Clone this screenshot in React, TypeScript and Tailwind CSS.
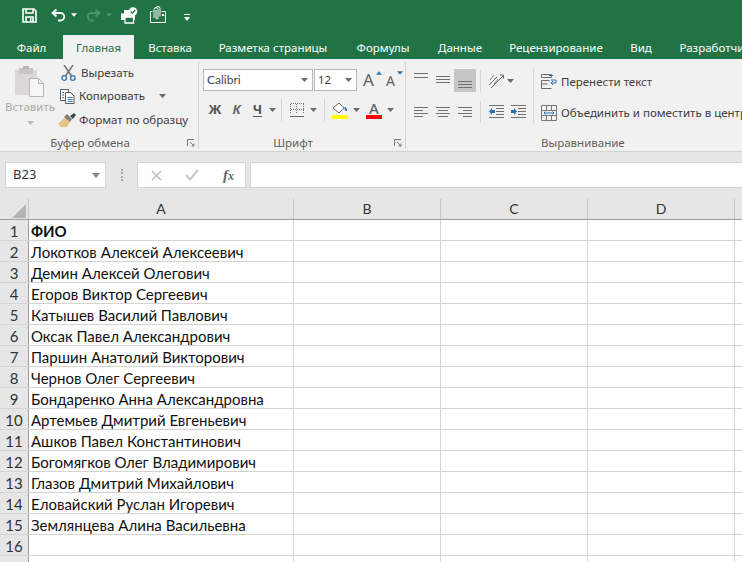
import React from "react";

const UI = "font-['Noto_Sans','Open_Sans',sans-serif]";

function Caret({ className = "" }: { className?: string }) {
  return <svg width="7" height="4" viewBox="0 0 7 4" className={`shrink-0 ${className}`}><path d="M0 0h7L3.500 4z" fill="#6a6a6a" /></svg>;
}

function AlignIcon({ kind }: { kind: "top" | "mid" | "bot" | "left" | "center" | "right" }) {
  const s = "#707070";
  if (kind === "top") return <svg width="16" height="23" viewBox="0 0 16 23"><path d="M1 4.500h14M1 8.500h14" stroke={s} fill="none" /></svg>;
  if (kind === "mid") return <svg width="16" height="23" viewBox="0 0 16 23"><path d="M1 7.500h14M1 10.500h14M1 13.500h14" stroke={s} fill="none" /></svg>;
  if (kind === "bot") return <svg width="16" height="23" viewBox="0 0 16 23"><path d="M1 12.500h14M1 15.500h14M1 18.500h14" stroke={s} fill="none" /></svg>;
  const d = kind === "left"
    ? "M1 3.500h14M1 6.500h9M1 9.500h14M1 12.500h9"
    : kind === "center"
      ? "M1 3.500h14M3 6.500h10M1 9.500h14M3 12.500h10"
      : "M1 3.500h14M6 6.500h9M1 9.500h14M6 12.500h9";
  return <svg width="16" height="16" viewBox="0 0 16 16"><path d={d} stroke={s} fill="none" /></svg>;
}

function Indent({ rev }: { rev?: boolean }) {
  return (
    <svg width="16" height="16" viewBox="0 0 16 16">
      <path d="M1 1.500h15M8 4.500h8M8 7.500h8M8 10.500h8M1 13.500h15" stroke="#707070" fill="none" />
      {rev ? <path d="M1 6h3V4l3 3.500-3 3.500V9H1z" fill="#2f6fb0" /> : <path d="M7 6H4V4L1 7.500 4 11V9h3z" fill="#2f6fb0" />}
    </svg>
  );
}

function Save() {
  return (
    <svg width="15" height="15" viewBox="0 0 15 15" fill="none">
      <path d="M1 1h11l2 2v11H1z" stroke="#fff" strokeWidth="1.600" />
      <path d="M4 1v4h7V1" stroke="#fff" strokeWidth="1.600" />
      <path d="M4 14V9h7v5" stroke="#fff" strokeWidth="1.600" />
      <path d="M8 10h1.500v4H8z" fill="#fff" />
    </svg>
  );
}

function Undo({ dim, flip }: { dim?: boolean; flip?: boolean }) {
  const c = dim ? "#4d9471" : "#fff";
  return (
    <svg width="15" height="14" viewBox="0 0 15 14" fill="none" className={flip ? "-scale-x-100" : ""}>
      <path d="M5.500 1.500 1.500 5l4 3.500" stroke={c} strokeWidth="1.800" />
      <path d="M2 5h7.500a3.500 3.500 0 0 1 0 7.500H7" stroke={c} strokeWidth="1.800" />
    </svg>
  );
}

function Printer() {
  return (
    <svg width="17" height="17" viewBox="0 0 17 17">
      <path d="M3 3h6v4H3z" fill="#fff" />
      <path d="M0 6.500h14V13H0z" fill="#fff" />
      <path d="M4 10h8.500v6H4z" fill="#217346" stroke="#fff" strokeWidth="1.300" />
      <circle cx="12" cy="4.500" r="4.300" fill="#fff" />
      <path d="m9.800 4.500 1.600 1.700 2.800-3.200" stroke="#217346" strokeWidth="1.200" fill="none" />
    </svg>
  );
}

function Attach() {
  return (
    <svg width="16" height="18" viewBox="0 0 16 18" fill="none" stroke="#fff">
      <path d="M2.500 5.500h-2v11h15v-11h-4" />
      <path d="M4 12V3.500a2 2 0 0 1 4 0V12a1 1 0 0 1-2 0V4" />
      <path d="M6 2.500a2 2 0 0 1 4 0v8" />
      <path d="M12 8h2v2h-2z" fill="#fff" stroke="none" />
    </svg>
  );
}

function Paste() {
  return (
    <svg width="30" height="31" viewBox="0 0 30 31">
      <path d="M0 4h22v25H0z" fill="#dcd8da" />
      <path d="M4 2h14v6H4z" fill="#c9c5c7" />
      <path d="M8 0h6v3H8z" fill="#b9b5b7" />
      <path d="M14.500 12.500h9l5 5v13h-14z" fill="#f7f5f7" stroke="#b8b4b6" />
      <path d="M23.500 12.500v5h5" fill="none" stroke="#b8b4b6" />
    </svg>
  );
}

function Scissors() {
  return (
    <svg width="15" height="16" viewBox="0 0 15 16" fill="none">
      <path d="M3 0 10.500 11M12 0 4.500 11" stroke="#6e6e6e" strokeWidth="1.400" />
      <circle cx="3.200" cy="13" r="2.300" stroke="#2f74b5" strokeWidth="1.300" />
      <circle cx="11.800" cy="13" r="2.300" stroke="#2f74b5" strokeWidth="1.300" />
    </svg>
  );
}

function Copy() {
  return (
    <svg width="15" height="16" viewBox="0 0 15 16" fill="none">
      <path d="M.5 1.500h8v11h-8z" fill="#fff" stroke="#5b5b5b" />
      <path d="M5.500 4.500h5l3.500 3.500v7.500H5.500z" fill="#fff" stroke="#5b5b5b" />
      <path d="M2 4.500h2M2 7h2M2 9.500h2M7.500 9.500h5M7.500 11.500h5M7.500 13.500h5" stroke="#2f74b5" />
    </svg>
  );
}

function Brush() {
  return (
    <svg width="18" height="15" viewBox="0 0 18 15">
      <path d="m0 11 7-7 5 5-3 5H3z" fill="#e8c48a" />
      <path d="m6 4 3-3 5 5-2 3z" fill="#808080" />
      <path d="m12 3 4-3 2 2-3 4z" fill="#4a4a4a" />
    </svg>
  );
}

function Launcher() {
  return (
    <svg width="8" height="8" viewBox="0 0 8 8" fill="none" className="shrink-0">
      <path d="M.5 7V.5H7" stroke="#777" />
      <path d="M3 3l4 4M7 4.500V7H4.500" stroke="#777" />
    </svg>
  );
}

function Group({ width, label, children }: { width: string; label: string; children: React.ReactNode }) {
  return (
    <div className={`flex flex-col shrink-0 border-r border-[#d4d4d4] h-[87px] mt-[3px] ${width}`}>
      <div className="flex-1 min-h-0 flex">{children}</div>
      <div className="h-[14px] flex items-center relative pr-[18px] pt-[1px]">
        <span className="text-[11.5px] text-[#5f5f5f] mx-auto">{label}</span>
        <span className="absolute right-[3px] top-[4px]"><Launcher /></span>
      </div>
    </div>
  );
}

const names = [
  "ФИО",
  "Локотков Алексей Алексеевич",
  "Демин Алексей Олегович",
  "Егоров Виктор Сергеевич",
  "Катышев Василий Павлович",
  "Оксак Павел Александрович",
  "Паршин Анатолий Викторович",
  "Чернов Олег Сергеевич",
  "Бондаренко Анна Александровна",
  "Артемьев Дмитрий Евгеньевич",
  "Ашков Павел Константинович",
  "Богомягков Олег Владимирович",
  "Глазов Дмитрий Михайлович",
  "Еловайский Руслан Игоревич",
  "Землянцева Алина Васильевна",
  "",
  "",
];

const tabs: [string, string][] = [
  ["Вставка", "w-[72px]"],
  ["Разметка страницы", "w-[134px]"],
  ["Формулы", "w-[86px]"],
  ["Данные", "w-[68px]"],
  ["Рецензирование", "w-[124px]"],
  ["Вид", "w-[46px]"],
  ["Разработчик", "w-[102px]"],
];

export default function App() {
  return (
    <div className={`w-[742px] h-[562px] overflow-hidden bg-white flex flex-col ${UI}`}>
      {/* Quick access */}
      <div className="h-[35px] shrink-0 bg-[#217346] flex items-center pb-[5px]">
        <div className="ml-[22px] flex items-center"><Save /></div>
        <div className="ml-[14px] flex items-center"><Undo /></div>
        <svg width="6" height="4" viewBox="0 0 7 4" className="ml-[5px]"><path d="M0 0h7L3.500 4z" fill="#fff" /></svg>
        <div className="ml-[9px] flex items-center"><Undo dim flip /></div>
        <svg width="6" height="4" viewBox="0 0 7 4" className="ml-[5px]"><path d="M0 0h7L3.500 4z" fill="#4d9471" /></svg>
        <div className="ml-[9px] flex items-center"><Printer /></div>
        <div className="ml-[12px] flex items-center"><Attach /></div>
        <svg width="6" height="7" viewBox="0 0 6 7" className="ml-[18px] mt-[4px]"><path d="M0 .5h6" stroke="#fff" /><path d="M0 3h6L3 7z" fill="#fff" /></svg>
      </div>
      {/* Tabs */}
      <div className="h-[24px] shrink-0 bg-[#217346] flex text-[11.5px] text-white">
        <div className="w-[63px] shrink-0 text-center leading-[22px] pt-[2px]">Файл</div>
        <div className="w-[71px] shrink-0 bg-[#f1f1f1] text-[#217346] text-center leading-[22px] pt-[2px]">Главная</div>
        {tabs.map(([t, w]) => (
          <div key={t} className={`${w} shrink-0 text-center leading-[22px] pt-[2px] whitespace-nowrap`}>{t}</div>
        ))}
      </div>
      {/* Ribbon */}
      <div className="h-[93px] shrink-0 bg-[#f1f1f1] border-b border-[#d2d2d2] flex text-[11.5px] text-[#3c3c3c]">
        <Group width="w-[199px]" label="Буфер обмена">
          <div className="w-[58px] shrink-0 flex flex-col items-center pt-[4px] pl-[2px]">
            <Paste />
            <span className="text-[#a8a8a8] mt-[2px] leading-[16px]">Вставить</span>
            <Caret className="mt-[6px] opacity-40" />
          </div>
          <div className="flex flex-col mt-[-1px]">
            <div className="h-[23px] flex items-center gap-[5px] ml-[3px]"><Scissors /><span>Вырезать</span></div>
            <div className="h-[24px] flex items-center gap-[4px] ml-[2px]"><Copy /><span>Копировать</span><Caret className="ml-[10px]" /></div>
            <div className="h-[24px] flex items-center gap-[3px]"><Brush /><span className="whitespace-nowrap">Формат по образцу</span></div>
          </div>
        </Group>
        <Group width="w-[207px]" label="Шрифт">
          <div className="flex flex-col pl-[4px] pt-[7px]">
            <div className="flex items-center h-[22px]">
              <div className="w-[110px] h-[22px] shrink-0 bg-white border border-[#b9b9b9] flex items-center justify-between pl-[3px] pr-[4px]">
                <span className="text-[#3a4a6a] font-['Lato',sans-serif] text-[12px]">Calibri</span><Caret />
              </div>
              <div className="w-[43px] h-[22px] shrink-0 ml-[1px] bg-white border border-[#b9b9b9] flex items-center justify-between pl-[3px] pr-[4px]">
                <span className="text-[#3c3c3c]">12</span><Caret />
              </div>
              <div className="ml-[6px] relative w-[16px] text-[17px] text-[#606060] leading-[20px]">A
                <svg width="6" height="4" viewBox="0 0 5 3" className="absolute right-[-3px] top-[1px]"><path d="M0 3h5L2.500 0z" fill="#2f74b5" /></svg>
              </div>
              <div className="ml-[7px] relative w-[14px] text-[14px] text-[#606060] leading-[20px] pt-[1px]">A
                <svg width="6" height="4" viewBox="0 0 5 3" className="absolute right-[-3px] top-[1px]"><path d="M0 0h5L2.500 3z" fill="#2f74b5" /></svg>
              </div>
            </div>
            <div className="flex items-center h-[22px] mt-[8px] text-[#555]">
              <span className="w-[24px] shrink-0 text-center font-bold text-[13px]">Ж</span>
              <span className="w-[19px] shrink-0 text-center font-bold italic text-[13px] text-[#666]">К</span>
              <span className="ml-[2px] w-[19px] shrink-0 text-center font-bold text-[13px] underline underline-offset-2">Ч</span>
              <Caret className="ml-[2px]" />
              <div className="w-px h-[22px] shrink-0 bg-[#d4d4d4] ml-[5px]" />
              <svg width="14" height="14" viewBox="0 0 14 14" className="ml-[8px] shrink-0" fill="none" shapeRendering="crispEdges">
                <path d="M.5 .5h13M.5 6.500h13M.5 .5v9M6.500 .5v9M13.500 .5v9" stroke="#777" strokeDasharray="1 1" />
                <path d="M0 13.500h14" stroke="#666" />
              </svg>
              <Caret className="ml-[6px]" />
              <div className="w-px h-[22px] shrink-0 bg-[#d4d4d4] ml-[7px]" />
              <div className="ml-[7px] w-[16px] shrink-0 flex flex-col items-center">
                <svg width="16" height="13" viewBox="0 0 16 13" fill="none">
                  <path d="m1 6 6-5 5 5-5 5z" fill="#fff" stroke="#666" />
                  <path d="M13 5q2 2 1.500 4-2-1-1.500-4z" fill="#2f74b5" stroke="#2f74b5" />
                </svg>
                <div className="w-[16px] h-[4px] bg-[#ffff00]" />
              </div>
              <Caret className="ml-[5px]" />
              <div className="ml-[6px] w-[16px] shrink-0 flex flex-col items-center">
                <span className="text-[15px] font-medium leading-[13px] h-[13px] text-[#606060]">A</span>
                <div className="w-[16px] h-[4px] bg-[#ff0000]" />
              </div>
              <Caret className="ml-[5px]" />
            </div>
          </div>
        </Group>
        <div className="flex flex-col flex-1 min-w-0 mt-[3px] h-[87px]">
          <div className="flex-1 flex min-h-0 pt-[7px]">
            <div className="flex flex-col pl-[4px] w-[127px] shrink-0">
              <div className="flex items-center h-[23px]">
                <div className="w-[22px] h-[23px] flex justify-center"><AlignIcon kind="top" /></div>
                <div className="w-[22px] h-[23px] flex justify-center"><AlignIcon kind="mid" /></div>
                <div className="w-[22px] h-[23px] flex justify-center bg-[#c6c6c6]"><AlignIcon kind="bot" /></div>
                <div className="w-px h-[22px] bg-[#d4d4d4] ml-[4px]" />
                <svg width="17" height="15" viewBox="0 0 17 15" className="ml-[7px]" fill="none">
                  <path d="m1 12 8-8M3 15l12-12M12 2h3.500v3.500" stroke="#666" />
                  <path d="M2 7l4-5M6 11l4-5" stroke="#888" />
                </svg>
                <Caret className="ml-[2px]" />
              </div>
              <div className="flex items-center h-[23px] mt-[8px]">
                <div className="w-[22px] flex justify-center"><AlignIcon kind="left" /></div>
                <div className="w-[22px] flex justify-center"><AlignIcon kind="center" /></div>
                <div className="w-[22px] flex justify-center"><AlignIcon kind="right" /></div>
                <div className="w-px h-[22px] bg-[#d4d4d4] ml-[4px]" />
                <div className="ml-[7px]"><Indent /></div>
                <div className="ml-[6px]"><Indent rev /></div>
              </div>
            </div>
            <div className="w-px h-[54px] shrink-0 bg-[#d4d4d4]" />
            <div className="flex flex-col pl-[7px] pt-[1px]">
              <div className="flex items-center h-[23px] gap-[4px]">
                <svg width="16" height="15" viewBox="0 0 16 15" fill="none" className="shrink-0">
                  <path d="M.5 .5h10v3H.5zM.5 6.500h8M.5 6.500v8h10M.5 10h6" stroke="#6a6a6a" />
                  <path d="M8 1.500h4M10 6h5M15 6v3h-5M12 7l-2 2 2 2" stroke="#2f74b5" />
                </svg>
                <span>Перенести текст</span>
              </div>
              <div className="flex items-center h-[23px] mt-[8px] gap-[4px] whitespace-nowrap">
                <svg width="16" height="16" viewBox="0 0 16 16" fill="none" className="shrink-0">
                  <path d="M.5 .5h15v15H.5zM.5 5.500h15M.5 10.500h15M5.500 .5v5M10.500 .5v5M5.500 10.500v5M10.500 10.500v5" stroke="#777" />
                  <path d="M3 8h10M4.500 6.500 3 8l1.500 1.500M11.500 6.500 13 8l-1.500 1.500" stroke="#2f74b5" />
                </svg>
                <span>Объединить и поместить в центре</span>
              </div>
            </div>
          </div>
          <div className="h-[14px] flex items-center pl-[135px] pt-[1px]">
            <span className="text-[11.5px] text-[#5f5f5f]">Выравнивание</span>
          </div>
        </div>
      </div>
      {/* Formula bar */}
      <div className="h-[47px] shrink-0 bg-[#e6e6e6] pt-[10px] flex items-start">
        <div className="ml-[5px] w-[101px] h-[26px] bg-white border border-[#d4d4d4] flex items-center justify-between pl-[7px] pr-[5px] text-[13px] text-[#333]">
          <span>B23</span>
          <svg width="8" height="5" viewBox="0 0 8 5"><path d="M0 0h8L4 5z" fill="#8a8a8a" /></svg>
        </div>
        <div className="ml-[15px] w-[3px] h-[12px] mt-[7px] border-l-2 border-dotted border-[#a8a8a8]" />
        <div className="ml-[13px] w-[109px] h-[26px] bg-white border border-[#d4d4d4] flex items-center">
          <svg width="11" height="11" viewBox="0 0 11 11" className="ml-[13px]"><path d="m1 1 9 9M10 1l-9 9" stroke="#bdbdbd" strokeWidth="1.500" /></svg>
          <svg width="14" height="12" viewBox="0 0 14 12" className="ml-[23px]" fill="none"><path d="m1 6 4 4.500L13 1" stroke="#c6c6c6" strokeWidth="2" /></svg>
          <span className="ml-[24px] text-[15px] italic font-bold text-[#666] font-['Liberation_Serif',serif]">f<span className="text-[12px]">x</span></span>
        </div>
        <div className="ml-[4px] flex-1 h-[26px] bg-white border border-[#d4d4d4] border-r-0" />
      </div>
      {/* Sheet */}
      <div className="flex-1 min-h-0 flex flex-col bg-white font-['Lato','Noto_Sans',sans-serif] text-[15px] text-[#111]">
        <div className="h-[21px] shrink-0 flex bg-[#e6e6e6] border-b border-[#9c9c9c] text-[#333] text-[14px]">
          <div className="w-[29px] shrink-0 border-r border-[#c6c6c6] relative">
            <svg width="14" height="14" viewBox="0 0 14 14" className="absolute right-[2px] bottom-[1px]"><path d="M14 0v14H0z" fill="#b4b4b4" /></svg>
          </div>
          {[["A", "w-[265px]"], ["B", "w-[147px]"], ["C", "w-[147px]"], ["D", "w-[147px]"]].map(([c, w]) => (
            <div key={c} className={`${w} shrink-0 border-r border-[#c6c6c6] text-center leading-[20px]`}>{c}</div>
          ))}
          <div className="flex-1" />
        </div>
        {names.map((n, i) => (
          <div key={i} className="h-[21px] shrink-0 flex border-b border-[#d4d4d4]">
            <div className="w-[29px] shrink-0 bg-[#e6e6e6] border-r border-[#9c9c9c] text-center leading-[22px] text-[#333]">{i < 16 ? i + 1 : ""}</div>
            <div className={`w-[265px] shrink-0 border-r border-[#d4d4d4] pl-[2px] leading-[22px] whitespace-nowrap ${i === 0 ? "font-bold" : ""}`}>{n}</div>
            <div className="w-[147px] shrink-0 border-r border-[#d4d4d4]" />
            <div className="w-[147px] shrink-0 border-r border-[#d4d4d4]" />
            <div className="w-[147px] shrink-0 border-r border-[#d4d4d4]" />
            <div className="flex-1" />
          </div>
        ))}
      </div>
    </div>
  );
}
